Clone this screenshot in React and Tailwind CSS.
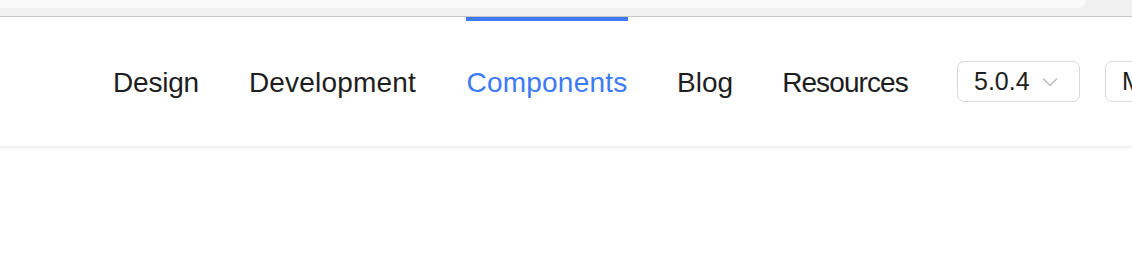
export default function App() {
  const items = [
    ["Design", "w-[86px]", "tracking-[-0.2px]"],
    ["Development", "w-[169px]", "tracking-[0.2px]"],
    ["Components", "w-[162px]", "tracking-[0.2px]"],
    ["Blog", "w-[56px]", "tracking-[0px]"],
    ["Resources", "w-[126px]", "tracking-[-0.9px]"],
  ];
  return (
    <div className="w-[1132px] h-[270px] bg-white overflow-hidden" style={{ fontFamily: '"Liberation Sans", Arial, sans-serif' }}>
      <div className="h-[16px] bg-[#f0f0f0] flex">
        <div className="w-[1086px] h-[8px] bg-[#fafafa] rounded-br-[12px]"></div>
      </div>
      <div className="h-[1px] bg-[#c3c6c3]"></div>
      <div className="h-[131px] flex items-stretch pl-[113px] border-b-[2px] border-[#f2f2f2] shadow-[0_2px_4px_rgba(0,0,0,0.03)]">
        <nav className="flex gap-[49px] shrink-0">
          {items.map(([t, w, tr]) => (
            <div key={t} className={`relative flex items-center justify-center shrink-0 ${w}`}>
              {t === "Components" && <div className="absolute top-0 left-0 right-0 h-[4px] bg-[#3d7af5]"></div>}
              <span className={`text-[28px] whitespace-nowrap leading-none pt-[2px] ${tr} ${t === "Components" ? "text-[#3d7af5]" : "text-[#1e1e1e]"}`}>{t}</span>
            </div>
          ))}
        </nav>
        <div className="flex items-center ml-[49px] gap-[25px] shrink-0">
          <div className="w-[123px] h-[41px] border-[1.5px] border-[#d9d9d9] rounded-[7px] flex items-center pl-[16px] shrink-0">
            <span className="text-[25px] text-[#1e1e1e] leading-none">5.0.4</span>
            <svg className="ml-[12px]" width="16" height="10" viewBox="0 0 16 10" fill="none">
              <path d="M1 1.5 L8 8.5 L15 1.5" stroke="#bdbdbd" strokeWidth="1.5" />
            </svg>
          </div>
          <div className="w-[80px] h-[41px] border-[1.5px] border-[#d9d9d9] rounded-[7px] flex items-center pl-[16px] shrink-0">
            <span className="text-[25px] text-[#1e1e1e] leading-none">M</span>
          </div>
        </div>
      </div>
    </div>
  );
}
